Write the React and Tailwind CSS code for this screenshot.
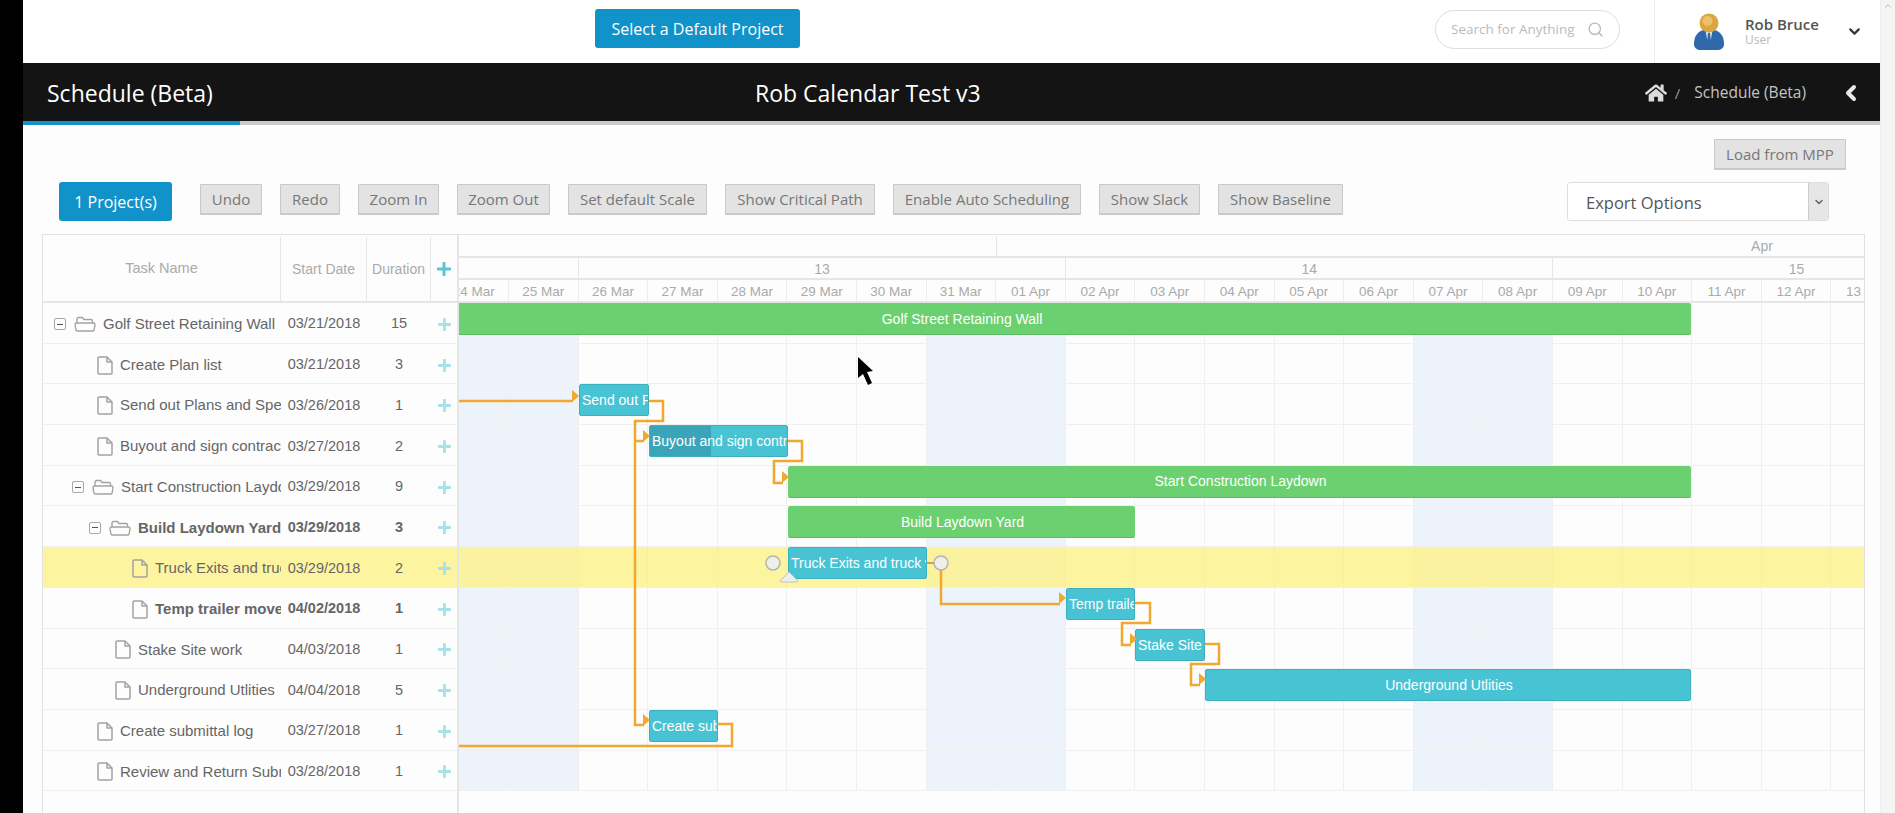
import React from 'react';
import { ChevronDown, ChevronLeft, Search } from 'lucide-react';
import { FaHome, FaPlus } from 'react-icons/fa';

const DAYS = [
  '24 Mar', '25 Mar', '26 Mar', '27 Mar', '28 Mar', '29 Mar', '30 Mar', '31 Mar',
  '01 Apr', '02 Apr', '03 Apr', '04 Apr', '05 Apr', '06 Apr', '07 Apr', '08 Apr',
  '09 Apr', '10 Apr', '11 Apr', '12 Apr', '13 Apr',
];

const WEEKEND = ['24 Mar', '25 Mar', '31 Mar', '01 Apr', '07 Apr', '08 Apr'];

const TOOLBAR = [
  { label: 'Undo', width: 'w-[62px]' },
  { label: 'Redo', width: 'w-[60px]' },
  { label: 'Zoom In', width: 'w-[81px]' },
  { label: 'Zoom Out', width: 'w-[93px]' },
  { label: 'Set default Scale', width: 'w-[139px]' },
  { label: 'Show Critical Path', width: 'w-[150px]' },
  { label: 'Enable Auto Scheduling', width: 'w-[188px]' },
  { label: 'Show Slack', width: 'w-[101px]' },
  { label: 'Show Baseline', width: 'w-[125px]' },
];

const GREEN = 'bg-[#6bd06f] border-b border-[#5dba62] justify-center text-[13.5px]';
const TEAL = 'bg-[#47c3d3] border border-[#3db0c0]';

const TASKS = [
  { name: 'Golf Street Retaining Wall', date: '03/21/2018', dur: 15, type: 'folder', pad: 'pl-[11px]', bar: { text: 'Golf Street Retaining Wall', cls: `${GREEN} left-[-228px] w-[1460px]` } },
  { name: 'Create Plan list', date: '03/21/2018', dur: 3, type: 'file', pad: 'pl-[54px]' },
  { name: 'Send out Plans and Specs', date: '03/26/2018', dur: 1, type: 'file', pad: 'pl-[54px]', bar: { text: 'Send out Plans and Specs', cls: `${TEAL} left-[120px] w-[70px]` } },
  { name: 'Buyout and sign contracts', date: '03/27/2018', dur: 2, type: 'file', pad: 'pl-[54px]', bar: { text: 'Buyout and sign contracts', cls: `${TEAL} left-[190px] w-[139px]`, progress: 'w-[61px]' } },
  { name: 'Start Construction Laydown', date: '03/29/2018', dur: 9, type: 'folder', pad: 'pl-[29px]', bar: { text: 'Start Construction Laydown', cls: `${GREEN} left-[329px] w-[903px]` } },
  { name: 'Build Laydown Yard', date: '03/29/2018', dur: 3, type: 'folder', pad: 'pl-[46px]', bold: true, bar: { text: 'Build Laydown Yard', cls: `${GREEN} left-[329px] w-[347px]` } },
  { name: 'Truck Exits and truck wash', date: '03/29/2018', dur: 2, type: 'file', pad: 'pl-[89px]', selected: true, bar: { text: 'Truck Exits and truck wash', cls: `${TEAL} left-[329px] w-[139px] -top-px` } },
  { name: 'Temp trailer move', date: '04/02/2018', dur: 1, type: 'file', pad: 'pl-[89px]', bold: true, bar: { text: 'Temp trailer move', cls: `${TEAL} left-[607px] w-[69px]` } },
  { name: 'Stake Site work', date: '04/03/2018', dur: 1, type: 'file', pad: 'pl-[72px]', bar: { text: 'Stake Site work', cls: `${TEAL} left-[676px] w-[70px]` } },
  { name: 'Underground Utlities', date: '04/04/2018', dur: 5, type: 'file', pad: 'pl-[72px]', bar: { text: 'Underground Utlities', cls: `${TEAL} left-[746px] w-[486px] justify-center text-[13.5px]` } },
  { name: 'Create submittal log', date: '03/27/2018', dur: 1, type: 'file', pad: 'pl-[54px]', bar: { text: 'Create submittal log', cls: `${TEAL} left-[190px] w-[69px]` } },
  { name: 'Review and Return Submittals', date: '03/28/2018', dur: 1, type: 'file', pad: 'pl-[54px]' },
];

// link paths are in page coordinates, the overlay viewBox starts at the timeline corner
const LINKS = [
  'M459 401H573',
  'M649 401H663V421H635V725H644',
  'M635 441H644',
  'M788 441H802V461H774V483H783',
  'M941 563V604H1060',
  'M1135 603H1150V623H1122V645H1131',
  'M1205 644H1219V664H1191V685H1200',
  'M718 724H732V746H459',
];

const ARROWS = [
  [572, 396], [643, 720], [643, 436], [782, 477], [1059, 598], [1130, 639], [1199, 679],
];

const FolderIcon = () => (
  <svg width="22" height="16" viewBox="0 0 22 16" fill="none" stroke="#a3a3a3" strokeWidth="1.4" strokeLinejoin="round" className="shrink-0">
    <path d="M3 7V3a1.5 1.5 0 0 1 1.5-1.5h4L10 3.5h7A1.5 1.5 0 0 1 18.500 5v2" />
    <path d="M1 8.500A1.500 1.500 0 0 1 2.500 7h17A1.500 1.500 0 0 1 21 8.500l-.8 5a1.500 1.500 0 0 1-1.500 1.500H3.300a1.500 1.500 0 0 1-1.500-1.500z" />
  </svg>
);

const FileIcon = () => (
  <svg width="16" height="19" viewBox="0 0 16 19" fill="none" stroke="#a3a3a3" strokeWidth="1.500" strokeLinejoin="round" className="shrink-0">
    <path d="M1 2a1 1 0 0 1 1-1h8l5 5v11a1 1 0 0 1-1 1H2a1 1 0 0 1-1-1z" />
    <path d="M10 1v5h5" />
  </svg>
);

const Avatar = () => (
  <svg width="32" height="38" viewBox="0 0 32 38">
    <path d="M1 31c0-8 4-13 10-14h10c6 1 10 6 10 14 0 4-3 6-7 6H8c-4 0-7-2-7-6z" fill="#2f68ab" />
    <path d="M12.500 17h7l-1.500 9-2 3-2-3z" fill="#dfe8f0" />
    <path d="M15 20h2l.8 7-1.800 5-1.800-5z" fill="#2f68ab" />
    <circle cx="16" cy="10" r="9.500" fill="#dba53f" />
    <circle cx="14.500" cy="8" r="5" fill="#eec06e" />
  </svg>
);

const MinusBox = () => (
  <span className="flex h-[12px] w-[12px] shrink-0 items-center justify-center rounded-[2px] border border-[#a8a8a8]">
    <span className="h-px w-[6px] bg-[#555]" />
  </span>
);

const GrayButton = ({ label, width }) => (
  <button className={`${width} h-[31px] shrink-0 rounded-[1px] border border-[#c9c9c9] border-b-2 bg-[#e3e3e3] text-[15px] text-[#777]`}>
    {label}
  </button>
);

const TaskRow = ({ task }) => (
  <div className={`flex h-[40.7px] items-center border-b border-[#f0f0f0] pt-[3px] font-['Liberation_Sans',sans-serif] text-[14.5px] text-[#666] ${task.selected ? 'bg-[#fdf4a0]' : ''} ${task.bold ? 'font-bold' : ''}`}>
    <div className={`flex h-full w-[238px] shrink-0 items-center gap-[6px] overflow-hidden whitespace-nowrap text-[15px] ${task.pad}`}>
      {task.type === 'folder' && <MinusBox />}
      {task.type === 'folder' ? <span className="ml-[2px] flex"><FolderIcon /></span> : <FileIcon />}
      <span className="ml-px">{task.name}</span>
    </div>
    <div className="w-[86px] shrink-0 text-center">{task.date}</div>
    <div className="w-[64px] shrink-0 text-center">{task.dur}</div>
    <div className="flex w-[26px] shrink-0 justify-center text-[#a9e2e6]">
      <FaPlus size={15} />
    </div>
  </div>
);

const TimelineRow = ({ task }) => (
  <div className={`relative flex h-[40.7px] overflow-hidden border-b border-[#f0f0f0] font-['Liberation_Sans',sans-serif] ${task.selected ? 'bg-[#fdf4a0]' : ''}`}>
    <div className="ml-[-19.6px] flex">
      {DAYS.map((day) => (
        <div
          key={day}
          className={`h-full w-[69.6px] shrink-0 border-r ${task.selected ? 'border-[#f8efa0]' : 'border-[#f0f0f0]'} ${WEEKEND.includes(day) ? (task.selected ? 'bg-[#fbf2a0]' : 'bg-[#edf3fb]') : ''}`}
        />
      ))}
    </div>
    {task.bar && (
      <div className={`absolute top-0 flex h-[32px] items-center overflow-hidden whitespace-nowrap rounded-[2px] pl-[2px] pt-px text-[14px] text-white ${task.bar.cls}`}>
        {task.bar.progress && <span className={`absolute inset-y-0 left-0 bg-[#3aa5b8] ${task.bar.progress}`} />}
        <span className="relative">{task.bar.text}</span>
      </div>
    )}
  </div>
);

export default function App() {
  return (
    <div className="flex h-[813px] w-[1895px] overflow-hidden bg-[#fdfdfd] font-['Open_Sans',sans-serif]">
      <div className="w-[23px] shrink-0 bg-black" />

      <div className="flex w-[1857px] shrink-0 flex-col">
        {/* top header */}
        <div className="flex h-[63px] shrink-0 items-start bg-white">
          <button className="ml-[572px] mt-[9px] h-[39px] w-[205px] rounded-[3px] bg-[#1193c9] text-[16px] text-white">
            Select a Default Project
          </button>
          <div className="ml-[635px] mt-[10px] flex h-[39px] w-[185px] items-center justify-between rounded-full border border-[#ddd] pl-[15px] pr-[15px] text-[13.500px] text-[#bbb]">
            Search for Anything
            <Search size={17} className="text-[#bbb]" />
          </div>
          <div className="ml-[34px] flex h-full items-center border-l border-[#eee] pl-[38px]">
            <Avatar />
            <div className="ml-[20px] w-[101px] leading-none">
              <div className="text-[15px] font-semibold text-[#555]">Rob Bruce</div>
              <div className="mt-[2px] text-[12px] text-[#bbb]">User</div>
            </div>
            <ChevronDown size={17} strokeWidth={3} className="text-[#333]" />
          </div>
        </div>

        {/* title bar */}
        <div className="flex h-[58px] shrink-0 items-center bg-[#141414] pt-[2px] text-white">
          <div className="w-[732px] shrink-0 pl-[24px] text-[23px]">Schedule (Beta)</div>
          <div className="text-[23px]">Rob Calendar Test v3</div>
          <div className="ml-[664px] flex items-center text-[#c4c4c4]">
            <FaHome size={22} className="text-[#dcdcdc]" />
            <span className="ml-[8px] text-[15px] text-[#999]">/</span>
            <span className="ml-[14px] text-[15.5px]">Schedule (Beta)</span>
            <ChevronLeft size={24} strokeWidth={4} className="ml-[33px] text-[#e8e8e8]" />
          </div>
        </div>
        <div className="h-[4px] shrink-0 bg-[#c9c9c9]">
          <div className="h-full w-[217px] bg-[#1193c9]" />
        </div>

        {/* toolbar */}
        <div className="flex justify-end pr-[34px] pt-[14px]">
          <GrayButton label="Load from MPP" width="w-[132px]" />
        </div>
        <div className="mt-[12px] flex items-start pl-[36px]">
          <button className="h-[39px] w-[113px] shrink-0 rounded-[3px] bg-[#1193c9] text-[16px] text-white">1 Project(s)</button>
          <div className="ml-[28px] mt-[2px] flex gap-[18px]">
            {TOOLBAR.map((b) => (
              <GrayButton key={b.label} label={b.label} width={b.width} />
            ))}
          </div>
          <div className="ml-[224px] flex h-[39px] w-[262px] shrink-0 items-center justify-between rounded-[3px] border border-[#ddd] bg-white pl-[18px] text-[16.5px] text-[#555]">
            <span className="pt-[3px]">Export Options</span>
            <span className="flex h-full w-[20px] items-center justify-center rounded-r-[3px] border-l border-[#ccc] bg-[#e6e6e6]">
              <ChevronDown size={12} strokeWidth={3} className="text-[#666]" />
            </span>
          </div>
        </div>

        {/* gantt */}
        <div className="relative ml-[19px] mt-[13px] flex w-[1823px] flex-1 border-l border-r border-t border-[#e2e2e2]">
          <div className="w-[416px] shrink-0 border-r-2 border-[#e6e6e6]">
            <div className="flex h-[68px] items-center border-b-2 border-[#e6e6e6] pt-[2px] font-['Liberation_Sans',sans-serif] text-[14px] text-[#aaa]">
              <div className="flex h-full w-[238px] shrink-0 items-center justify-center border-r border-[#e6e6e6] text-[14.5px]">Task Name</div>
              <div className="flex h-full w-[86px] shrink-0 items-center justify-center border-r border-[#e6e6e6]">Start Date</div>
              <div className="flex h-full w-[64px] shrink-0 items-center justify-center border-r border-[#e6e6e6]">Duration</div>
              <div className="flex w-[26px] shrink-0 justify-center text-[#5cc4d2]">
                <FaPlus size={16} />
              </div>
            </div>
            {TASKS.map((t) => (
              <TaskRow key={t.name} task={t} />
            ))}
          </div>

          <div className="relative min-w-0 flex-1 overflow-hidden">
            <div className="h-[68px] overflow-hidden border-b-2 border-[#e6e6e6] font-['Liberation_Sans',sans-serif] text-[#aaa]">
              <div className="flex h-[23px] border-b-2 border-[#e6e6e6] pt-px text-[14px]">
                <div className="w-[538px] shrink-0 border-r border-[#e6e6e6]" />
                <div className="flex w-[1530px] shrink-0 items-center justify-center">Apr</div>
              </div>
              <div className="flex h-[22px] border-b-2 border-[#e6e6e6] text-[14px]">
                <div className="w-[120px] shrink-0 border-r border-[#e6e6e6]" />
                {['13', '14', '15'].map((w) => (
                  <div key={w} className="flex w-[487.2px] shrink-0 items-center justify-center border-r border-[#e6e6e6] pt-[3px]">{w}</div>
                ))}
              </div>
              <div className="ml-[-19.6px] flex h-[21px] text-[13.500px]">
                {DAYS.map((day) => (
                  <div key={day} className="flex w-[69.6px] shrink-0 items-center justify-center whitespace-nowrap border-r border-[#eee] pt-[3px]">{day}</div>
                ))}
              </div>
            </div>
            {TASKS.map((t) => (
              <TimelineRow key={t.name} task={t} />
            ))}

            {/* dependency links and the selected task handles */}
            <svg className="absolute left-0 top-[68px] h-[450px] w-[1405px]" viewBox="459 303 1405 450" fill="none">
              {LINKS.map((d) => (
                <path key={d} d={d} stroke="#f0a82f" strokeWidth="2.500" />
              ))}
              {ARROWS.map(([x, y]) => (
                <path key={`${x}-${y}`} d={`M${x} ${y - 6}L${x + 7} ${y}L${x} ${y + 6}Z`} fill="#f0a82f" />
              ))}
              <path d="M927 563H941" stroke="#c9a24a" strokeWidth="2" />
              <circle cx="773" cy="563" r="7" fill="#eeeeea" stroke="#b5b5ad" strokeWidth="1.500" />
              <circle cx="941" cy="563" r="7" fill="#eeeeea" stroke="#b5b5ad" strokeWidth="1.500" />
              <path d="M780 581L789 572L798 581Q798 582 796 582H782Q780 582 780 581Z" fill="#eeeeea" stroke="#c2c2ba" strokeWidth="1" />
              {/* mouse pointer */}
              <path d="M858 357L858 378L863 374L868 385L872 383L867 372L873 371Z" fill="#000" />
            </svg>
          </div>
        </div>
      </div>

      <div className="flex w-[15px] shrink-0 justify-center border-l border-[#eee] bg-[#f5f5f5] pt-[1px]">
        <ChevronDown size={10} className="rotate-180 text-[#aaa]" />
      </div>
    </div>
  );
}
